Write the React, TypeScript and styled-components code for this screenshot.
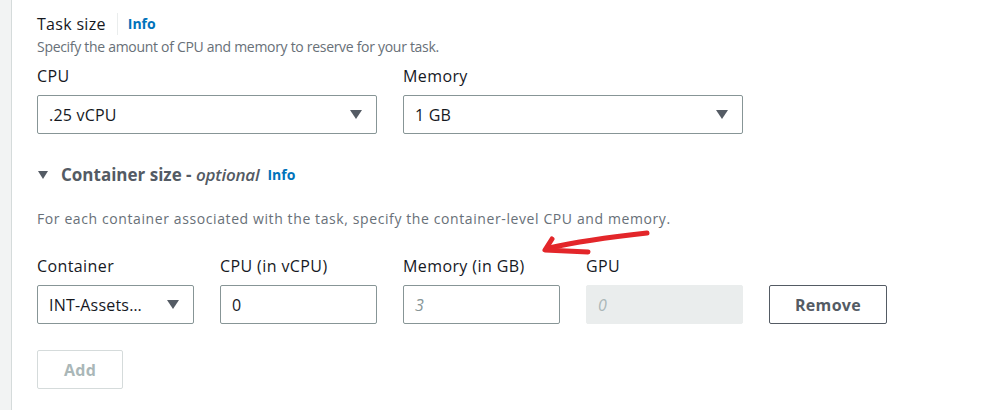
import * as React from "react"
import styled, { createGlobalStyle } from "styled-components"

const GlobalStyle = createGlobalStyle`
  html, body {
    margin: 0;
    padding: 0;
    background: #ffffff;
  }
  body {
    font-family: "Open Sans", "Noto Sans", sans-serif;
    color: #16191f;
  }
`

const Page = styled.div`
  position: relative;
  display: flex;
  width: 1000px;
  height: 410px;
  overflow: hidden;
  background: #ffffff;
`

const Sidebar = styled.div`
  width: 11px;
  flex-shrink: 0;
  background: #f2f3f3;
  border-right: 1px solid #d5dbdb;
`

const Main = styled.main`
  flex: 1;
  padding: 13px 0 0 25px;
`

const HeaderRow = styled.div`
  display: flex;
  align-items: center;
  height: 22px;
`

const Title = styled.h2`
  margin: 0;
  font-size: 16px;
  font-weight: 400;
  line-height: 22px;
  letter-spacing: 0.3px;
  color: #16191f;
`

const Divider = styled.span`
  display: inline-block;
  width: 1px;
  height: 22px;
  margin: 0 10px 0 11px;
  background: #eaeded;
`

const InfoLink = styled.a<{ $gap?: number }>`
  font-size: 14px;
  font-weight: 700;
  line-height: 22px;
  color: #0073bb;
  text-decoration: none;
  margin-left: ${(p) => p.$gap ?? 0}px;
`

const Description = styled.p<{ $top: number; $spacing?: number }>`
  margin: ${(p) => p.$top}px 0 0;
  font-size: 14px;
  line-height: 20px;
  letter-spacing: ${(p) => p.$spacing ?? 0}px;
  color: #687078;
`

const Grid = styled.div<{ $top: number }>`
  display: grid;
  grid-template-columns: repeat(4, 157px) 118px;
  column-gap: 26px;
  row-gap: 8px;
  margin-top: ${(p) => p.$top}px;
`

const Label = styled.label<{ $span?: number }>`
  grid-column: span ${(p) => p.$span ?? 1};
  font-size: 16px;
  line-height: 22px;
  letter-spacing: 0.4px;
  color: #16191f;
  white-space: nowrap;
`

const SelectBox = styled.div<{ $span?: number }>`
  grid-column: span ${(p) => p.$span ?? 1};
  display: flex;
  align-items: center;
  justify-content: space-between;
  box-sizing: border-box;
  height: 39px;
  padding: 0 14px 0 11px;
  border: 1px solid #879596;
  border-radius: 2px;
  font-size: 16px;
  letter-spacing: 0.2px;
  color: #16191f;
  white-space: nowrap;
`

const Caret = styled.span`
  width: 0;
  height: 0;
  border-left: 6px solid transparent;
  border-right: 6px solid transparent;
  border-top: 9px solid #545b64;
`

const Field = styled.div<{ $disabled?: boolean }>`
  display: flex;
  align-items: center;
  box-sizing: border-box;
  height: 39px;
  padding: 0 11px;
  border: 1px solid ${(p) => (p.$disabled ? "#eaeded" : "#879596")};
  border-radius: 2px;
  background: ${(p) => (p.$disabled ? "#eaeded" : "#ffffff")};
  font-size: 16px;
  color: #16191f;
`

const Placeholder = styled.span<{ $muted?: boolean }>`
  font-style: italic;
  color: ${(p) => (p.$muted ? "#aab7b8" : "#879596")};
`

const Button = styled.button<{ $disabled?: boolean }>`
  box-sizing: border-box;
  height: 39px;
  padding: 0 20px;
  border: 1px solid ${(p) => (p.$disabled ? "#d5dbdb" : "#545b64")};
  border-radius: 2px;
  background: #ffffff;
  font-family: "Open Sans", "Noto Sans", sans-serif;
  font-size: 16px;
  font-weight: 700;
  letter-spacing: 0.3px;
  color: ${(p) => (p.$disabled ? "#aab7b8" : "#545b64")};
`

const AddButton = styled(Button)`
  width: 86px;
  margin-top: 26px;
`

const Expander = styled.div`
  display: flex;
  align-items: center;
  height: 24px;
  margin-top: 29px;
`

const ExpandCaret = styled.span`
  width: 0;
  height: 0;
  margin: 0 13px 0 1px;
  border-left: 5px solid transparent;
  border-right: 5px solid transparent;
  border-top: 8px solid #545b64;
`

const ExpanderTitle = styled.h3`
  margin: 0;
  font-size: 17px;
  font-weight: 700;
  line-height: 24px;
  color: #545b64;

  em {
    font-weight: 600;
    letter-spacing: -0.2px;
  }
`

const Annotation = styled.svg`
  position: absolute;
  left: 0;
  top: 0;
  pointer-events: none;
`

const App = () => {
  return (
    <>
      <GlobalStyle />
      <Page>
        <Sidebar />
        <Main>
          <HeaderRow>
            <Title>Task size</Title>
            <Divider />
            <InfoLink href="#">Info</InfoLink>
          </HeaderRow>
          <Description $top={2} $spacing={-0.3}>
            Specify the amount of CPU and memory to reserve for your task.
          </Description>
          <Grid $top={8}>
            <Label $span={2}>CPU</Label>
            <Label $span={3}>Memory</Label>
            <SelectBox $span={2}>
              .25 vCPU
              <Caret />
            </SelectBox>
            <SelectBox $span={2}>
              1 GB
              <Caret />
            </SelectBox>
          </Grid>

          <Expander>
            <ExpandCaret />
            <ExpanderTitle>
              Container size - <em>optional</em>
            </ExpanderTitle>
            <InfoLink href="#" $gap={8}>
              Info
            </InfoLink>
          </Expander>
          <Description $top={22} $spacing={0.6}>
            For each container associated with the task, specify the
            container-level CPU and memory.
          </Description>

          <Grid $top={26}>
            <Label>Container</Label>
            <Label>CPU (in vCPU)</Label>
            <Label>Memory (in GB)</Label>
            <Label $span={2}>GPU</Label>
            <SelectBox>
              INT-Assets…
              <Caret />
            </SelectBox>
            <Field>0</Field>
            <Field>
              <Placeholder>3</Placeholder>
            </Field>
            <Field $disabled>
              <Placeholder $muted>0</Placeholder>
            </Field>
            <Button>Remove</Button>
          </Grid>
          <AddButton $disabled>Add</AddButton>
        </Main>

        <Annotation width="1000" height="410" viewBox="0 0 1000 410">
          <g
            fill="none"
            stroke="#e3262a"
            strokeWidth="5"
            strokeLinecap="round"
            strokeLinejoin="round"
          >
            <path d="M647 233 C 620 236, 580 241, 549 248" />
            <path d="M552 239 L545 250 L588 252" />
          </g>
        </Annotation>
      </Page>
    </>
  )
}

export default App
